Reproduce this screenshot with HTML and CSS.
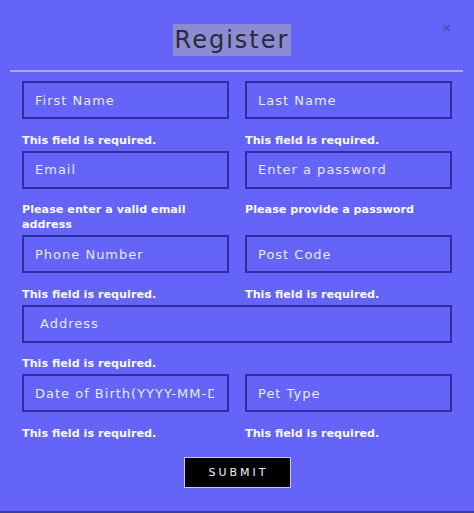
FILE: index.html
```html
<!DOCTYPE html>
<html lang="en">
<head>
<meta charset="utf-8">
<title>Register</title>
<link rel="stylesheet" href="styles.css">
</head>
<body>
<div class="modal">
  <header class="modal-head">
    <h1 class="modal-title"><span class="modal-title-text">Register</span></h1>
    <button class="modal-close" type="button" aria-label="Close">×</button>
  </header>
  <hr class="modal-rule">
  <form class="reg-form" novalidate>
    <div class="reg-grid">
      <div class="field">
        <input class="field-input" type="text" placeholder="First Name">
        <p class="field-error">This field is required.</p>
      </div>
      <div class="field">
        <input class="field-input" type="text" placeholder="Last Name">
        <p class="field-error">This field is required.</p>
      </div>
      <div class="field">
        <input class="field-input" type="email" placeholder="Email">
        <p class="field-error">Please enter a valid email address</p>
      </div>
      <div class="field">
        <input class="field-input" type="password" placeholder="Enter a password">
        <p class="field-error">Please provide a password</p>
      </div>
      <div class="field">
        <input class="field-input" type="tel" placeholder="Phone Number">
        <p class="field-error">This field is required.</p>
      </div>
      <div class="field">
        <input class="field-input" type="text" placeholder="Post Code">
        <p class="field-error">This field is required.</p>
      </div>
      <div class="field field-wide">
        <input class="field-input field-input-wide" type="text" placeholder="Address">
        <p class="field-error">This field is required.</p>
      </div>
      <div class="field">
        <input class="field-input" type="text" placeholder="Date of Birth(YYYY-MM-DD)">
        <p class="field-error">This field is required.</p>
      </div>
      <div class="field">
        <input class="field-input" type="text" placeholder="Pet Type">
        <p class="field-error">This field is required.</p>
      </div>
    </div>
    <div class="reg-actions">
      <button class="submit-btn" type="submit">SUBMIT</button>
    </div>
  </form>
</div>
</body>
</html>
```
FILE: styles.css
```css
html, body {
  margin: 0;
  padding: 0;
  background: #6464f8;
}

body {
  font-family: "DejaVu Sans", "Liberation Sans", sans-serif;
}

.modal {
  position: relative;
  box-sizing: border-box;
  min-height: 513px;
  border-bottom: 2px solid #3c3c96;
  background: #6464f8;
}

.modal-head {
  padding: 24px 10px 0 0;
  text-align: center;
}

.modal-title {
  margin: 0;
  font-size: 24px;
  font-weight: normal;
  line-height: 32px;
  height: 32px;
}

.modal-title-text {
  display: inline-block;
  padding: 0 2px 0 2px;
  letter-spacing: 2px;
  color: #2a2a3a;
  background: #8c8cd2;
}

.modal-close {
  position: absolute;
  top: 20px;
  right: 22px;
  padding: 0;
  border: 0;
  background: none;
  font-family: "DejaVu Sans", sans-serif;
  font-size: 13px;
  line-height: 16px;
  color: #4848a8;
  cursor: pointer;
}

.modal-rule {
  margin: 14px 11px 0 10px;
  height: 2px;
  border: 0;
  background: #a9a9f4;
}

.reg-form {
  padding: 9px 22px 0 22px;
}

.reg-grid {
  display: grid;
  grid-template-columns: 207px 207px;
  column-gap: 16px;
}

.field-wide {
  grid-column: 1 / span 2;
}

.field-input {
  display: block;
  box-sizing: border-box;
  width: 100%;
  height: 38px;
  margin: 0;
  padding: 0 13px 0 11px;
  border: 2px solid #2e2ea2;
  border-radius: 0;
  background: transparent;
  font-family: "DejaVu Sans", sans-serif;
  font-size: 13px;
  letter-spacing: 1px;
  color: #e8e8ff;
  outline: none;
}

.field-input-wide {
  padding-left: 16px;
}

.field-input::placeholder {
  color: #e8e8ff;
  opacity: 1;
}

.field-error {
  margin: 13.5px 0 3px 0;
  font-size: 11.2px;
  font-weight: bold;
  line-height: 15px;
  color: #f8f8ff;
}

.reg-actions {
  display: flex;
  justify-content: center;
  padding-top: 13.5px;
}

.submit-btn {
  box-sizing: border-box;
  width: 107px;
  height: 31px;
  margin: 0;
  padding: 0 0 0 3px;
  border: 1px solid #c4c4ff;
  border-radius: 0;
  background: #000;
  color: #f2f2f2;
  font-family: "DejaVu Sans", sans-serif;
  font-size: 11px;
  letter-spacing: 3px;
  cursor: pointer;
}
```
